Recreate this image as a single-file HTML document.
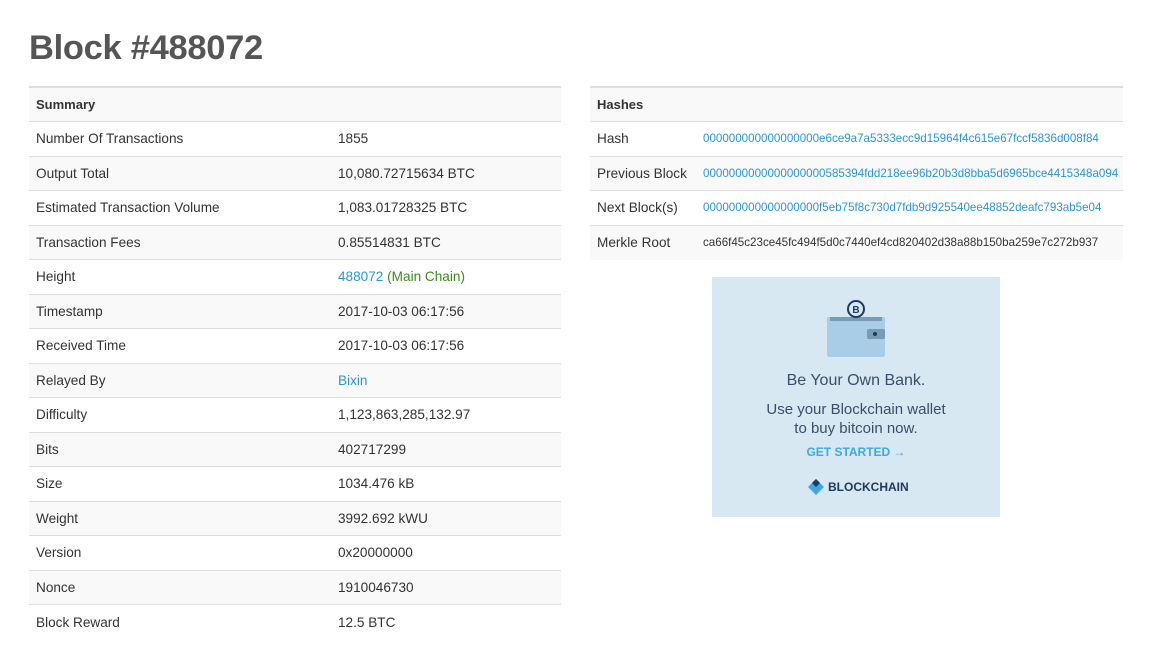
<!DOCTYPE html>
<html><head><meta charset="utf-8"><style>
*{margin:0;padding:0;box-sizing:border-box}
body{width:1155px;height:661px;background:#fff;font-family:"Liberation Sans",Arial,sans-serif;color:#333;position:relative;overflow:hidden}
h1{position:absolute;left:29px;top:29px;font-size:34.5px;font-weight:bold;color:#555;letter-spacing:-0.3px}
table{position:absolute;border-collapse:collapse;font-size:13.6px;table-layout:fixed}
td{height:34.5px;border-top:1px solid #ddd;padding:0 7px;vertical-align:middle;white-space:nowrap;overflow:hidden}
tr:nth-child(odd) td{background:#f9f9f9}
th{height:34.5px;text-align:left;padding:0 7px;font-size:13px;border-top:2px solid #ddd;background:#f9f9f9;color:#333}
a{color:#2a95d8;text-decoration:none}
.g{color:#3c8a1e}
#l{left:29px;top:86px;width:532px}
#r{left:590px;top:86px;width:533px}
#r td:last-child{font-size:11.6px;padding-left:6px;overflow:visible}
.ad{position:absolute;left:712px;top:277px;width:288px;height:240px;background:#d8e8f2;text-align:center;color:#3a4d6a}
</style></head><body>
<h1>Block #488072</h1>
<table id="l">
<colgroup><col style="width:302px"><col></colgroup>
<tr><th colspan="2">Summary</th></tr>
<tr><td>Number Of Transactions</td><td>1855</td></tr>
<tr><td>Output Total</td><td>10,080.72715634 BTC</td></tr>
<tr><td>Estimated Transaction Volume</td><td>1,083.01728325 BTC</td></tr>
<tr><td>Transaction Fees</td><td>0.85514831 BTC</td></tr>
<tr><td>Height</td><td><a>488072</a> <span class="g">(Main Chain)</span></td></tr>
<tr><td>Timestamp</td><td>2017-10-03 06:17:56</td></tr>
<tr><td>Received Time</td><td>2017-10-03 06:17:56</td></tr>
<tr><td>Relayed By</td><td><a>Bixin</a></td></tr>
<tr><td>Difficulty</td><td>1,123,863,285,132.97</td></tr>
<tr><td>Bits</td><td>402717299</td></tr>
<tr><td>Size</td><td>1034.476 kB</td></tr>
<tr><td>Weight</td><td>3992.692 kWU</td></tr>
<tr><td>Version</td><td>0x20000000</td></tr>
<tr><td>Nonce</td><td>1910046730</td></tr>
<tr><td>Block Reward</td><td>12.5 BTC</td></tr>
</table>
<table id="r">
<colgroup><col style="width:107px"><col></colgroup>
<tr><th colspan="2">Hashes</th></tr>
<tr><td>Hash</td><td><a>000000000000000000e6ce9a7a5333ecc9d15964f4c615e67fccf5836d008f84</a></td></tr>
<tr><td>Previous Block</td><td><a>0000000000000000000585394fdd218ee96b20b3d8bba5d6965bce4415348a094</a></td></tr>
<tr><td>Next Block(s)</td><td><a>000000000000000000f5eb75f8c730d7fdb9d925540ee48852deafc793ab5e04</a></td></tr>
<tr><td>Merkle Root</td><td>ca66f45c23ce45fc494f5d0c7440ef4cd820402d38a88b150ba259e7c272b937</td></tr>
</table>
<div class="ad">
<svg width="288" height="90" style="position:absolute;left:0;top:0">
<rect x="115" y="40" width="58" height="40" rx="2" fill="#a9cde6"/>
<rect x="118" y="40" width="52" height="4" fill="#7a9bb3"/>
<rect x="155" y="52" width="18" height="10" rx="2" fill="#7a9bb3"/>
<circle cx="163" cy="57" r="2" fill="#1f3a60"/>
<circle cx="144" cy="32" r="8" fill="#d8e8f2" stroke="#1f3a60" stroke-width="2"/>
<text x="144" y="36" font-size="10" font-weight="bold" text-anchor="middle" fill="#1f3a60" font-family="Liberation Sans">B</text>
</svg>
<div style="position:absolute;top:95px;width:100%;font-size:16px">Be Your Own Bank.</div>
<div style="position:absolute;top:123px;width:100%;font-size:15px;line-height:19px">Use your Blockchain wallet<br>to buy bitcoin now.</div>
<div style="position:absolute;top:168px;width:100%;font-size:12px;font-weight:bold;color:#3fa8e0">GET STARTED →</div>
<div style="position:absolute;top:202px;left:96px;font-size:12px;font-weight:bold;color:#1f3a60">
<svg width="16" height="16" style="vertical-align:-4px;margin-right:4px"><path d="M8 0L16 8L8 16L0 8Z" fill="#3fa8e0"/><path d="M8 0L12 4L8 8L4 4Z" fill="#1f3a60"/></svg>BLOCKCHAIN</div>
</div>
</body></html>
